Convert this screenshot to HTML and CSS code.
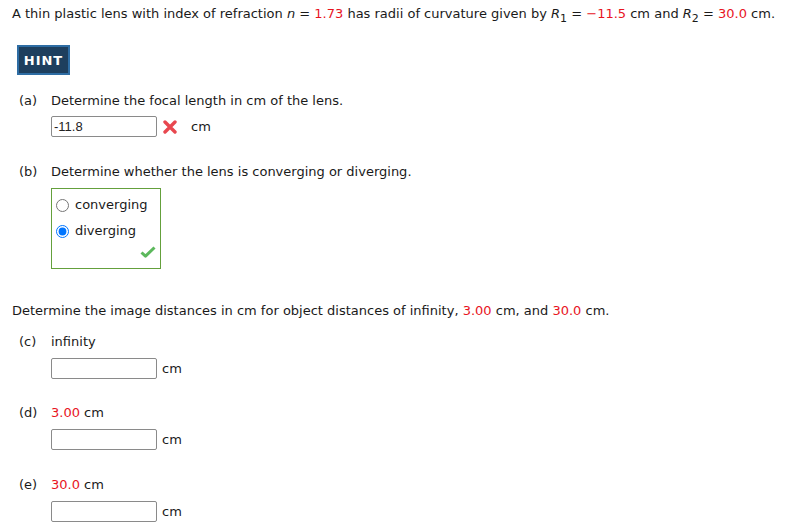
FILE: index.html
```html
<!DOCTYPE html>
<html>
<head>
<meta charset="utf-8">
<link rel="stylesheet" href="styles.css">
</head>
<body>
<p class="stem">A thin plastic lens with index of refraction <i>n</i> = <span class="num">1.73</span> has radii of curvature given by <i>R</i><sub>1</sub> = <span class="num">&minus;11.5</span> cm and <i>R</i><sub>2</sub> = <span class="num">30.0</span> cm.</p>

<div class="hint-wrap"><button class="hint">HINT</button></div>

<div class="part part-a">
  <div class="qline"><span class="lbl">(a)</span><span>Determine the focal length in cm of the lens.</span></div>
  <div class="ansline">
    <input class="ans" type="text" value="-11.8">
    <svg class="xmark" width="14" height="14" viewBox="0 0 14 14"><path d="M2 2 L12 12 M12 2 L2 12" stroke="#e8474f" stroke-width="3.4" stroke-linecap="round"/></svg>
    <span class="unit unit-a">cm</span>
  </div>
</div>

<div class="part part-b">
  <div class="qline"><span class="lbl">(b)</span><span>Determine whether the lens is converging or diverging.</span></div>
  <div class="choices">
    <label class="choice"><input type="radio" name="b"><span>converging</span></label>
    <label class="choice"><input type="radio" name="b" checked><span>diverging</span></label>
    <div class="checkrow"><svg width="16" height="12" viewBox="0 0 16 12"><path d="M1.5 6.5 L5.5 10.2 L14.5 1.5" fill="none" stroke="#5cb85c" stroke-width="3" stroke-linejoin="round"/></svg></div>
  </div>
</div>

<p class="intro">Determine the image distances in cm for object distances of infinity, <span class="num">3.00</span> cm, and <span class="num">30.0</span> cm.</p>

<div class="part part-c">
  <div class="qline"><span class="lbl">(c)</span><span>infinity</span></div>
  <div class="ansline"><input class="ans" type="text"><span class="unit">cm</span></div>
</div>

<div class="part part-d">
  <div class="qline"><span class="lbl">(d)</span><span><span class="num">3.00</span> cm</span></div>
  <div class="ansline"><input class="ans" type="text"><span class="unit">cm</span></div>
</div>

<div class="part part-e">
  <div class="qline"><span class="lbl">(e)</span><span><span class="num">30.0</span> cm</span></div>
  <div class="ansline"><input class="ans" type="text"><span class="unit">cm</span></div>
</div>
</body>
</html>
```

FILE: styles.css
```css
html, body {
  margin: 0;
  background: #fff;
}
body {
  padding: 5px 12px 0 12px;
  font-family: "DejaVu Sans", Verdana, sans-serif;
  font-size: 13px;
  color: #1a1a1a;
  line-height: 18px;
}
p { margin: 0; }
.stem { white-space: nowrap; }
.num { color: #e8141e; }
i { font-style: italic; }
sub {
  font-size: 11px;
  line-height: 0;
  vertical-align: -4px;
}
.hint-wrap {
  margin-top: 22px;
  padding-left: 5px;
  display: flex;
}
.hint {
  box-sizing: border-box;
  width: 53px;
  height: 30px;
  background: #1e3f5e;
  border: 2px solid #2e6da4;
  color: #fff;
  font-family: "DejaVu Sans", Verdana, sans-serif;
  font-weight: bold;
  font-size: 13px;
  letter-spacing: 1px;
  padding: 0;
  margin: 0;
  border-radius: 0;
}
.part { padding-left: 7px; }
.qline { display: flex; }
.lbl { width: 32px; flex: none; }
.ansline {
  display: flex;
  align-items: center;
  margin-left: 32px;
  margin-top: 6px;
}
.ans {
  box-sizing: border-box;
  width: 106px;
  height: 21px;
  margin: 0;
  border: 1px solid #8a8a8a;
  border-radius: 2px;
  padding: 1px 2px;
  font-family: "Liberation Sans", Arial, sans-serif;
  font-size: 13px;
  color: #222;
  background: #fff;
}
.xmark { margin-left: 6px; flex: none; }
.unit { margin-left: 5px; }
.unit-a { margin-left: 14px; }
.part-a { margin-top: 17px; }
.part-b { margin-top: 26px; }
.choices {
  box-sizing: border-box;
  margin-left: 32px;
  margin-top: 7px;
  width: 110px;
  height: 81px;
  border: 1px solid #64a03c;
  padding: 7px 0 0 4px;
}
.choice {
  display: flex;
  align-items: center;
  height: 18px;
  margin-bottom: 8px;
}
.choice input {
  margin: 0 6px 0 0;
  width: 13px;
  height: 13px;
}
.checkrow {
  display: flex;
  justify-content: flex-end;
  padding-right: 4px;
  margin-top: -2px;
}
.intro { margin-top: 33px; }
.part-c { margin-top: 13px; }
.part-c .ansline, .part-d .ansline, .part-e .ansline { margin-top: 7px; }
.part-d { margin-top: 25px; }
.part-e { margin-top: 26px; }
```
